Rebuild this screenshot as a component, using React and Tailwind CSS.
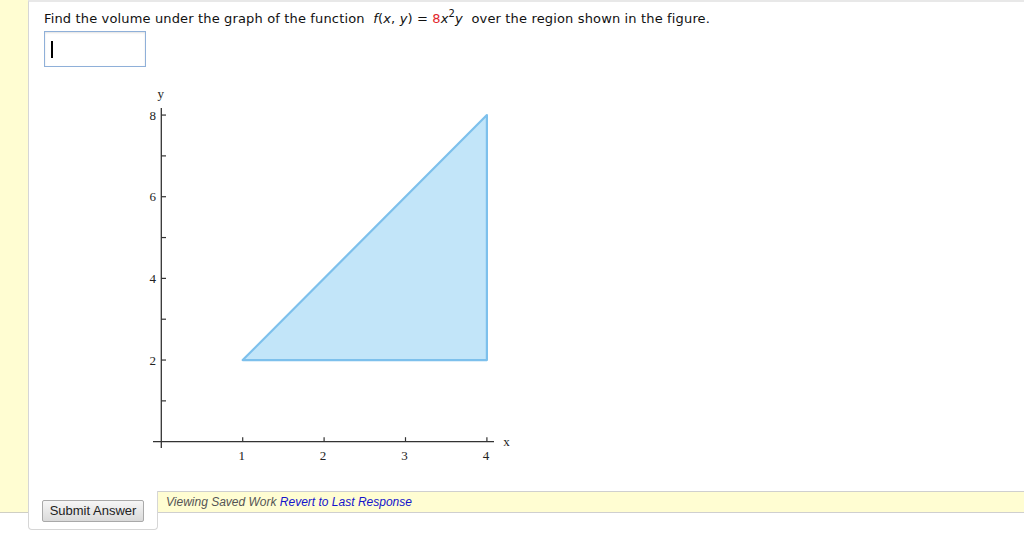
import React from 'react';

const X = (u) => 161.3 + 81.4 * u;
const Y = (v) => 441.7 - 40.83 * v;

function Graph() {
  const serif = { fontFamily: '"Liberation Serif", "Times New Roman", serif' };
  return (
    <svg width="380" height="380" viewBox="140 85 380 380" className="block">
      <polygon
        points={`${X(1)},${Y(2)} ${X(4)},${Y(2)} ${X(4)},${Y(8)}`}
        fill="#c2e5f9"
        stroke="#7dc0ec"
        strokeWidth="2.2"
        strokeLinejoin="round"
      />
      {/* axes */}
      <line x1="161.3" y1="108" x2="161.3" y2="448" stroke="#333" strokeWidth="1.3" />
      <line x1="153" y1={Y(0)} x2="494" y2={Y(0)} stroke="#333" strokeWidth="1.3" />
      {[1, 2, 3, 4, 5, 6, 7, 8].map((v) => (
        <line key={v} x1="161.3" y1={Y(v)} x2="166" y2={Y(v)} stroke="#333" strokeWidth="1.2" />
      ))}
      {[1, 2, 3, 4].map((u) => (
        <line key={u} x1={X(u)} y1={Y(0)} x2={X(u)} y2={Y(0) - 4.5} stroke="#333" strokeWidth="1.2" />
      ))}
      <g fill="#222" fontSize="13" style={serif}>
        {[2, 4, 6, 8].map((v) => (
          <text key={v} x="152.7" y={Y(v) + 4.5} textAnchor="middle">{v}</text>
        ))}
        {[1, 2, 3, 4].map((u) => (
          <text key={u} x={X(u) - 1} y="460" textAnchor="middle">{u}</text>
        ))}
        <text x="160.7" y="98" textAnchor="middle">y</text>
        <text x="506.5" y="446" textAnchor="middle">x</text>
      </g>
    </svg>
  );
}

export default function App() {
  return (
    <div className="w-[1024px] h-[544px] bg-white flex overflow-hidden">
      <div className="w-[28px] h-[513px] shrink-0 bg-[#fffdd2] border-b border-[#cfcfc4]" />

      <div className="flex-1 flex flex-col">
        <div className="h-[491px] border-t-2 border-t-[#e8e8e8] border-l border-l-[#d6d6d6] pl-[15px] pt-[8px]">
          <p className="text-[13px] leading-[18px] tracking-[0.15px] text-[#111] font-['DejaVu_Sans',Verdana,sans-serif] whitespace-nowrap">
            Find the volume under the graph of the function&nbsp; <i>f</i>(<i>x</i>, <i>y</i>) ={' '}
            <span className="text-[#e2262b]">8</span>
            <i>x</i>
            <sup className="text-[10px] relative -top-[6px]">2</sup>
            <i>y</i>&nbsp; over the region shown in the figure.
          </p>

          <div className="mt-[3px] w-[102px] h-[36px] border border-[#8fb0d9] shadow-[inset_0_1px_2px_rgba(0,0,0,0.12)] bg-white flex items-center pl-[6px]">
            <div className="w-[1.5px] h-[17px] bg-black" />
          </div>

          <div className="mt-[18px] ml-[96px]">
            <Graph />
          </div>
        </div>

        <div className="flex items-start">
          <div className="w-[130px] h-[39px] shrink-0 border-l border-r border-b border-[#d6d6d6] rounded-b-[4px] pl-[13px] pt-[6px]">
            <button className="w-[102px] h-[22px] border border-[#a9a9a9] rounded-[2px] bg-gradient-to-b from-[#f6f6f6] to-[#dadada] text-[13px] leading-[20px] text-[#222] font-['Liberation_Sans',Arial,sans-serif]">
              Submit Answer
            </button>
          </div>
          <div className="flex-1 h-[22px] bg-[#fffdd2] border-y border-[#cfcfcf] pl-[8px] flex items-center">
            <span className="text-[12px] italic text-[#555] font-['Liberation_Sans',Arial,sans-serif] whitespace-nowrap">
              Viewing Saved Work <span className="text-[#1414cc]">Revert to Last Response</span>
            </span>
          </div>
        </div>
      </div>
    </div>
  );
}
